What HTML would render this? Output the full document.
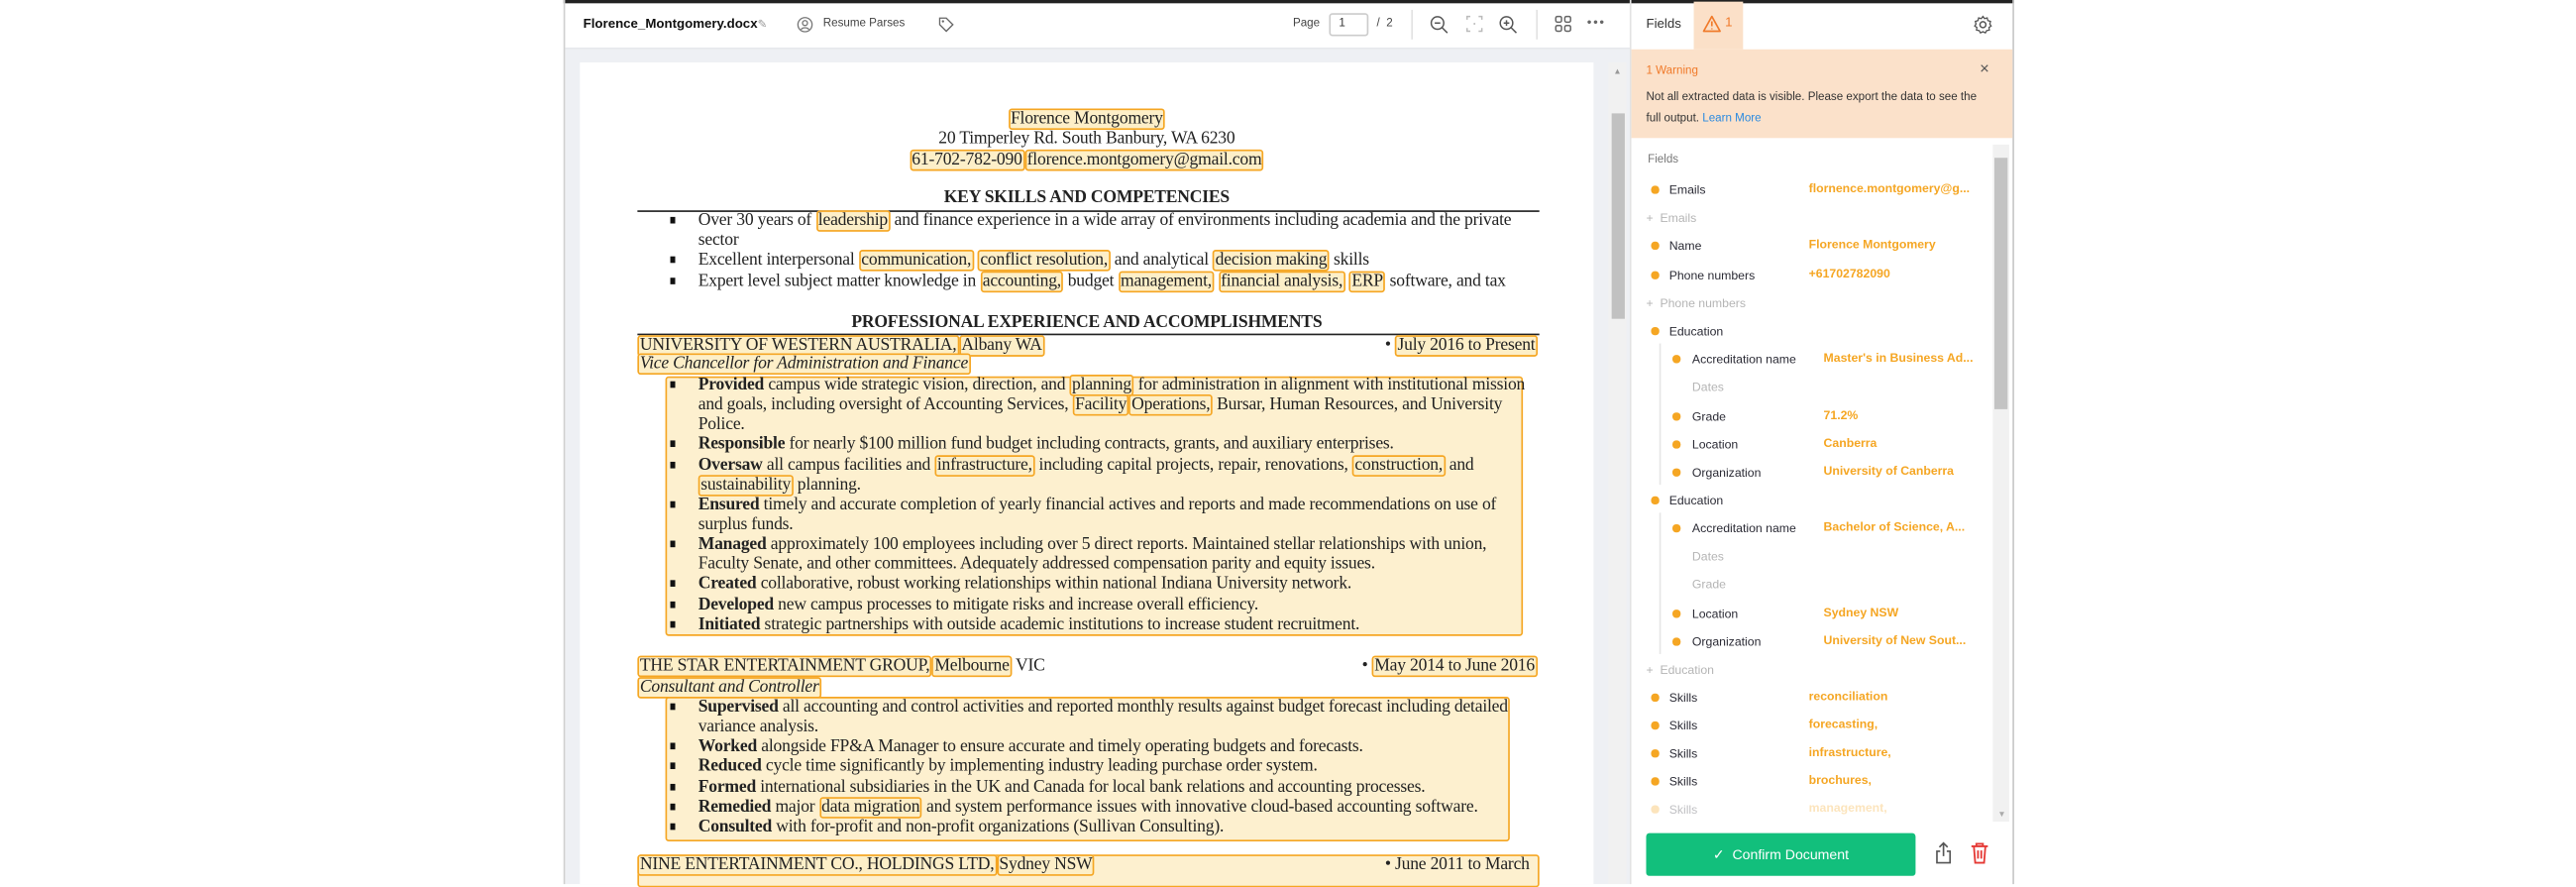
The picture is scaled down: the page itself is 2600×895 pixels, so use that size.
<!DOCTYPE html>
<html><head><meta charset="utf-8"><style>
*{box-sizing:border-box;margin:0;padding:0}
html,body{width:2600px;height:892px;overflow:hidden;background:#fff}
#w{position:absolute;left:0;top:0;width:1568px;height:538px;transform:scale(1.65816);transform-origin:0 0;font-family:"Liberation Sans",sans-serif}
.a{position:absolute}
.topline{left:343px;top:0;width:883px;height:1.5px;background:#222}
.doc{left:344px;top:30px;width:648px;height:508px;background:#eef0f4}
.page{left:353px;top:38px;width:617px;height:500px;background:#fff}
.l{position:absolute;font-family:"Liberation Serif",serif;font-size:10.6px;line-height:12px;color:#222;white-space:nowrap;letter-spacing:-0.12px}
.h{border:1px solid #f5a623;border-radius:2px;background:#fdefc8;padding:0 0.5px}
.blk{position:absolute;border:1px solid #f5a623;border-radius:2px;background:#fdf0cf}
.b{position:absolute;width:3px;height:4px;background:#111;margin-top:2px}
b{font-weight:bold}
.fl{position:absolute;font-size:7.4px;color:#2b2b35;white-space:nowrap}
.fv{position:absolute;font-size:7.4px;color:#f5a623;white-space:nowrap;font-weight:bold}
.dot{position:absolute;width:4.5px;height:4.5px;border-radius:50%;background:#f5a623}
.gray{color:#b5b5b5}
</style></head><body><div id="w">
<div class="a topline"></div>
<div class="a" style="left:343px;top:0;width:1px;height:538px;background:#d0d0d0"></div>
<div class="a" style="left:1225px;top:0;width:1px;height:538px;background:#c8c8c8"></div>
<div class="a" style="left:344px;top:29px;width:648px;height:1px;background:#e4e6ea"></div>
<div class="a" style="left:355px;top:10px;font-size:8px;font-weight:bold;color:#111">Florence_Montgomery.docx<span style="font-weight:normal;color:#999;font-size:7px">✎</span></div>
<svg class="a" style="left:485px;top:10px" width="10" height="10" viewBox="0 0 10 10"><circle cx="5" cy="5" r="4.3" fill="none" stroke="#777" stroke-width=".8"/><circle cx="5" cy="4" r="1.5" fill="none" stroke="#777" stroke-width=".8"/><path d="M2.6 8c.8-1.5 4-1.5 4.8 0" fill="none" stroke="#777" stroke-width=".8"/></svg>
<div class="a" style="left:501px;top:11px;font-size:7px;color:#444">Resume Parses</div>
<svg class="a" style="left:571px;top:10px" width="10" height="10" viewBox="0 0 10 10"><path d="M1 1h4l4 4-4 4-4-4z" fill="none" stroke="#666" stroke-width=".8"/><circle cx="3" cy="3" r=".7" fill="#666"/></svg>
<div class="a" style="left:787px;top:11px;font-size:7px;color:#444">Page</div>
<div class="a" style="left:809px;top:8px;width:24px;height:14px;border:1px solid #ccc;border-radius:2px;font-size:7px;color:#333;padding:2px 0 0 5px">1</div>
<div class="a" style="left:838px;top:11px;font-size:7px;color:#444">/ &nbsp;2</div>
<div class="a" style="left:859px;top:6px;width:1px;height:18px;background:#e2e2e2"></div>
<svg class="a" style="left:870px;top:9px" width="12" height="12" viewBox="0 0 12 12"><circle cx="5" cy="5" r="3.8" fill="none" stroke="#555" stroke-width=".9"/><path d="M7.8 7.8 11 11M3.3 5h3.4" stroke="#555" stroke-width=".9"/></svg>
<svg class="a" style="left:892px;top:9px" width="11" height="11" viewBox="0 0 11 11"><path d="M1 3V1h2M8 1h2v2M10 8v2H8M3 10H1V8" fill="none" stroke="#bbb" stroke-width=".9"/><circle cx="5.5" cy="5.5" r=".6" fill="#bbb"/></svg>
<svg class="a" style="left:912px;top:9px" width="12" height="12" viewBox="0 0 12 12"><circle cx="5" cy="5" r="3.8" fill="none" stroke="#555" stroke-width=".9"/><path d="M7.8 7.8 11 11M3.3 5h3.4M5 3.3v3.4" stroke="#555" stroke-width=".9"/></svg>
<div class="a" style="left:935px;top:6px;width:1px;height:18px;background:#e2e2e2"></div>
<svg class="a" style="left:946px;top:9px" width="11" height="11" viewBox="0 0 11 11"><g fill="none" stroke="#666" stroke-width=".9"><rect x="1" y="1" width="3.5" height="3.5" rx="1"/><rect x="6.5" y="1" width="3.5" height="3.5" rx="1"/><rect x="1" y="6.5" width="3.5" height="3.5" rx="1"/><rect x="6.5" y="6.5" width="3.5" height="3.5" rx="1"/></g></svg>
<div class="a" style="left:966px;top:9px;font-size:8px;color:#666;letter-spacing:1px">•••</div>
<div class="a doc"></div>
<div class="a page"></div>
<div class="a" style="left:979px;top:38px;width:11px;height:500px;background:#f1f1f1"></div>
<div class="a" style="left:981px;top:69px;width:8px;height:125px;background:#c1c1c1"></div>
<div class="a" style="left:982px;top:41px;font-size:5px;color:#999">▲</div>

<div class="l" style="left:0;width:1323px;text-align:center;top:67px"><span class="h">Florence Montgomery</span></div>
<div class="l" style="left:0;width:1323px;text-align:center;top:79px">20 Timperley Rd. South Banbury, WA 6230</div>
<div class="l" style="left:0;width:1323px;text-align:center;top:92px"><span class="h">61-702-782-090</span><span class="h">florence.montgomery@gmail.com</span></div>
<div class="l" style="left:0;width:1323px;text-align:center;top:115px;font-weight:bold">KEY SKILLS AND COMPETENCIES</div>
<div class="a" style="left:388px;top:128px;width:549px;height:1px;background:#222"></div>
<div class="b" style="left:408px;top:130px"></div><div class="l" style="left:425px;top:129px">Over 30 years of <span class="h">leadership</span> and finance experience in a wide array of environments including academia and the private</div>
<div class="l" style="left:425px;top:141px">sector</div>
<div class="b" style="left:408px;top:154px"></div><div class="l" style="left:425px;top:153px">Excellent interpersonal <span class="h">communication,</span> <span class="h">conflict resolution,</span> and analytical <span class="h">decision making</span> skills</div>
<div class="b" style="left:408px;top:167px"></div><div class="l" style="left:425px;top:166px">Expert level subject matter knowledge in <span class="h">accounting,</span> budget <span class="h">management,</span> <span class="h">financial analysis,</span> <span class="h">ERP</span> software, and tax</div>
<div class="l" style="left:0;width:1323px;text-align:center;top:191px;font-weight:bold">PROFESSIONAL EXPERIENCE AND ACCOMPLISHMENTS</div>
<div class="a" style="left:388px;top:203px;width:549px;height:1px;background:#222"></div>

<div class="l" style="left:388px;top:205px"><span class="h">UNIVERSITY OF WESTERN AUSTRALIA,</span><span class="h">Albany WA</span></div>
<div class="l" style="left:843px;top:205px">• <span class="h">July 2016 to Present</span></div>
<div class="l" style="left:388px;top:216px;font-style:italic"><span class="h">Vice Chancellor for Administration and Finance</span></div>
<div class="blk" style="left:405px;top:229px;width:522px;height:158px"></div>
<div class="b" style="left:408px;top:230px"></div><div class="l" style="left:425px;top:229px"><b>Provided</b> campus wide strategic vision, direction, and <span class="h">planning</span> for administration in alignment with institutional mission</div>
<div class="l" style="left:425px;top:241px">and goals, including oversight of Accounting Services, <span class="h">Facility</span><span class="h">Operations,</span> Bursar, Human Resources, and University</div>
<div class="l" style="left:425px;top:253px">Police.</div>
<div class="b" style="left:408px;top:266px"></div><div class="l" style="left:425px;top:265px"><b>Responsible</b> for nearly $100 million fund budget including contracts, grants, and auxiliary enterprises.</div>
<div class="b" style="left:408px;top:279px"></div><div class="l" style="left:425px;top:278px"><b>Oversaw</b> all campus facilities and <span class="h">infrastructure,</span> including capital projects, repair, renovations, <span class="h">construction,</span> and</div>
<div class="l" style="left:425px;top:290px"><span class="h">sustainability</span> planning.</div>
<div class="b" style="left:408px;top:303px"></div><div class="l" style="left:425px;top:302px"><b>Ensured</b> timely and accurate completion of yearly financial actives and reports and made recommendations on use of</div>
<div class="l" style="left:425px;top:314px">surplus funds.</div>
<div class="b" style="left:408px;top:327px"></div><div class="l" style="left:425px;top:326px"><b>Managed</b> approximately 100 employees including over 5 direct reports. Maintained stellar relationships with union,</div>
<div class="l" style="left:425px;top:338px">Faculty Senate, and other committees. Adequately addressed compensation parity and equity issues.</div>
<div class="b" style="left:408px;top:351px"></div><div class="l" style="left:425px;top:350px"><b>Created</b> collaborative, robust working relationships within national Indiana University network.</div>
<div class="b" style="left:408px;top:364px"></div><div class="l" style="left:425px;top:363px"><b>Developed</b> new campus processes to mitigate risks and increase overall efficiency.</div>
<div class="b" style="left:408px;top:376px"></div><div class="l" style="left:425px;top:375px"><b>Initiated</b> strategic partnerships with outside academic institutions to increase student recruitment.</div>

<div class="l" style="left:388px;top:400px"><span class="h">THE STAR ENTERTAINMENT GROUP,</span><span class="h">Melbourne</span> VIC</div>
<div class="l" style="left:829px;top:400px">• <span class="h">May 2014 to June 2016</span></div>
<div class="l" style="left:388px;top:413px;font-style:italic"><span class="h">Consultant and Controller</span></div>
<div class="blk" style="left:405px;top:424px;width:514px;height:88px"></div>
<div class="b" style="left:408px;top:426px"></div><div class="l" style="left:425px;top:425px"><b>Supervised</b> all accounting and control activities and reported monthly results against budget forecast including detailed</div>
<div class="l" style="left:425px;top:437px">variance analysis.</div>
<div class="b" style="left:408px;top:450px"></div><div class="l" style="left:425px;top:449px"><b>Worked</b> alongside FP&amp;A Manager to ensure accurate and timely operating budgets and forecasts.</div>
<div class="b" style="left:408px;top:462px"></div><div class="l" style="left:425px;top:461px"><b>Reduced</b> cycle time significantly by implementing industry leading purchase order system.</div>
<div class="b" style="left:408px;top:475px"></div><div class="l" style="left:425px;top:474px"><b>Formed</b> international subsidiaries in the UK and Canada for local bank relations and accounting processes.</div>
<div class="b" style="left:408px;top:487px"></div><div class="l" style="left:425px;top:486px"><b>Remedied</b> major <span class="h">data migration</span> and system performance issues with innovative cloud-based accounting software.</div>
<div class="b" style="left:408px;top:499px"></div><div class="l" style="left:425px;top:498px"><b>Consulted</b> with for-profit and non-profit organizations (Sullivan Consulting).</div>
<div class="blk" style="left:388px;top:520px;width:549px;height:20px"></div>
<div class="l" style="left:388px;top:521px"><span class="h">NINE ENTERTAINMENT CO., HOLDINGS LTD,</span><span class="h">Sydney NSW</span></div>
<div class="l" style="left:843px;top:521px">• June 2011 to March</div>

<div class="a" style="left:992px;top:0;width:1px;height:538px;background:#e3e3e3"></div>
<div class="a" style="left:1002px;top:10px;font-size:8px;color:#333">Fields</div>
<div class="a" style="left:1031px;top:1px;width:30px;height:29px;background:#fbe0c8"></div>
<svg class="a" style="left:1036px;top:9px" width="12" height="11" viewBox="0 0 12 11"><path d="M6 1 11 10H1z" fill="none" stroke="#f07a2a" stroke-width="1" stroke-linejoin="round"/><path d="M6 4v3M6 8.2v.6" stroke="#f07a2a" stroke-width="1"/></svg>
<div class="a" style="left:1050px;top:9px;font-size:8px;color:#f07a2a">1</div>
<svg class="a" style="left:1201px;top:9px" width="12" height="12" viewBox="0 0 12 12"><circle cx="6" cy="6" r="1.8" fill="none" stroke="#555" stroke-width=".9"/><path d="M6 1l1 1.3 1.6-.4.4 1.6L10.6 4l-.4 1.6L11 6.8l-1.3.9.2 1.6-1.6.3-.8 1.4-1.5-.7-1.5.7-.8-1.4-1.6-.3.2-1.6L1 6.8l.8-1.2L1.4 4l1.6-.5.4-1.6L5 2.3z" fill="none" stroke="#555" stroke-width=".8"/></svg>
<div class="a" style="left:993px;top:30px;width:232px;height:54px;background:#fbe1ca"></div>
<div class="a" style="left:1002px;top:40px;font-size:7px;color:#f07a2a">1 Warning</div>
<div class="a" style="left:1205px;top:37px;font-size:10px;color:#555">×</div>
<div class="a" style="left:1002px;top:54px;font-size:7px;color:#333;line-height:12.5px;width:203px">Not all extracted data is visible. Please export the data to see the full output. <span style="color:#2a8ae0">Learn More</span></div>
<div class="a" style="left:1213px;top:88px;width:10px;height:412px;background:#f1f1f1"></div>
<div class="a" style="left:1214px;top:96px;width:8px;height:153px;background:#c3c3c3"></div>
<div class="a" style="left:1003px;top:94px;font-size:7px;color:#777">Fields</div>

<div class="dot" style="left:1005px;top:113px"></div><div class="fl" style="left:1016px;top:111px">Emails</div><div class="fv" style="left:1101px;top:110px">flornence.montgomery@g...</div>
<div class="fl gray" style="left:1002px;top:128px">+ &nbsp;Emails</div>
<div class="dot" style="left:1005px;top:147px"></div><div class="fl" style="left:1016px;top:145px">Name</div><div class="fv" style="left:1101px;top:144px">Florence Montgomery</div>
<div class="dot" style="left:1005px;top:165px"></div><div class="fl" style="left:1016px;top:163px">Phone numbers</div><div class="fv" style="left:1101px;top:162px">+61702782090</div>
<div class="fl gray" style="left:1002px;top:180px">+ &nbsp;Phone numbers</div>
<div class="dot" style="left:1005px;top:199px"></div><div class="fl" style="left:1016px;top:197px">Education</div>
<div class="a" style="left:1010px;top:209px;width:1px;height:86px;background:#e6e6e6"></div>
<div class="dot" style="left:1018px;top:216px"></div><div class="fl" style="left:1030px;top:214px">Accreditation name</div><div class="fv" style="left:1110px;top:213px">Master's in Business Ad...</div>
<div class="fl gray" style="left:1030px;top:231px">Dates</div>
<div class="dot" style="left:1018px;top:251px"></div><div class="fl" style="left:1030px;top:249px">Grade</div><div class="fv" style="left:1110px;top:248px">71.2%</div>
<div class="dot" style="left:1018px;top:268px"></div><div class="fl" style="left:1030px;top:266px">Location</div><div class="fv" style="left:1110px;top:265px">Canberra</div>
<div class="dot" style="left:1018px;top:285px"></div><div class="fl" style="left:1030px;top:283px">Organization</div><div class="fv" style="left:1110px;top:282px">University of Canberra</div>
<div class="dot" style="left:1005px;top:302px"></div><div class="fl" style="left:1016px;top:300px">Education</div>
<div class="a" style="left:1010px;top:312px;width:1px;height:86px;background:#e6e6e6"></div>
<div class="dot" style="left:1018px;top:319px"></div><div class="fl" style="left:1030px;top:317px">Accreditation name</div><div class="fv" style="left:1110px;top:316px">Bachelor of Science, A...</div>
<div class="fl gray" style="left:1030px;top:334px">Dates</div>
<div class="fl gray" style="left:1030px;top:351px">Grade</div>
<div class="dot" style="left:1018px;top:371px"></div><div class="fl" style="left:1030px;top:369px">Location</div><div class="fv" style="left:1110px;top:368px">Sydney NSW</div>
<div class="dot" style="left:1018px;top:388px"></div><div class="fl" style="left:1030px;top:386px">Organization</div><div class="fv" style="left:1110px;top:385px">University of New Sout...</div>
<div class="fl gray" style="left:1002px;top:403px">+ &nbsp;Education</div>
<div class="dot" style="left:1005px;top:422px"></div><div class="fl" style="left:1016px;top:420px">Skills</div><div class="fv" style="left:1101px;top:419px">reconciliation</div>
<div class="dot" style="left:1005px;top:439px"></div><div class="fl" style="left:1016px;top:437px">Skills</div><div class="fv" style="left:1101px;top:436px">forecasting,</div>
<div class="dot" style="left:1005px;top:456px"></div><div class="fl" style="left:1016px;top:454px">Skills</div><div class="fv" style="left:1101px;top:453px">infrastructure,</div>
<div class="dot" style="left:1005px;top:473px"></div><div class="fl" style="left:1016px;top:471px">Skills</div><div class="fv" style="left:1101px;top:470px">brochures,</div>
<div style="opacity:.3"><div class="dot" style="left:1005px;top:490px"></div><div class="fl" style="left:1016px;top:488px">Skills</div><div class="fv" style="left:1101px;top:487px">management,</div></div>
<div class="a" style="left:1216px;top:493px;font-size:5px;color:#aaa">▼</div>
<div class="a" style="left:1002px;top:507px;width:164px;height:26px;background:#12bf7c;border-radius:2px;color:#fff;font-size:8.5px;text-align:center;line-height:26px">✓&nbsp; Confirm Document</div>
<svg class="a" style="left:1177px;top:512px" width="12" height="14" viewBox="0 0 12 14"><path d="M4 6H2v7h8V6H8M6 9V1M3.5 3.5 6 1l2.5 2.5" fill="none" stroke="#555" stroke-width="1"/></svg>
<svg class="a" style="left:1199px;top:512px" width="12" height="14" viewBox="0 0 12 14"><path d="M1 3h10M4 3V1.5h4V3M2.5 3l.8 10h5.4l.8-10M5 5.5v5M7 5.5v5" fill="none" stroke="#e53935" stroke-width="1.1"/></svg>
</div></body></html>
